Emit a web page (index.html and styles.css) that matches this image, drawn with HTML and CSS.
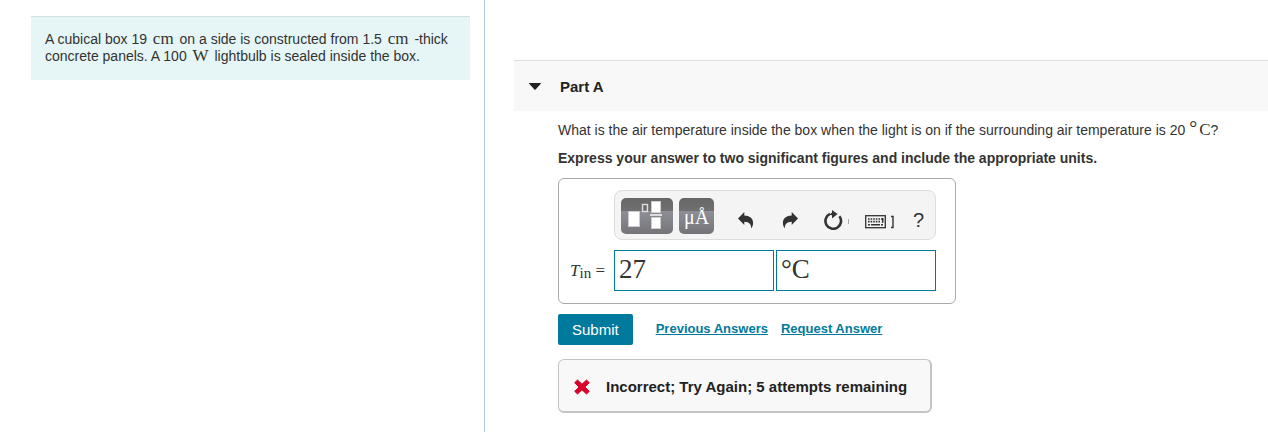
FILE: index.html
```html
<!DOCTYPE html>
<html lang="en">
<head>
    <meta charset="UTF-8">
    <meta name="viewport" content="width=device-width, initial-scale=1.0">
    <title>Part A</title>
    <link rel="stylesheet" href="styles.css">
</head>
<body>
    <div class="page">
        <aside class="problem-pane">
            <p class="problem">A cubical box 19 <span class="unit">cm</span> on a side is constructed from 1.5 <span class="unit">cm</span> -thick concrete panels. A 100 <span class="unit">W</span> lightbulb is sealed inside the box.</p>
        </aside>

        <main class="question-pane">
            <h2 class="part-header">
                <button type="button" class="part-toggle" aria-expanded="true">
                    <svg class="caret" viewBox="0 0 12 7" aria-hidden="true"><path d="M0.5 0h11a.5.5 0 0 1 .3.8L6.6 6.4a.8.8 0 0 1-1.2 0L.2.8A.5.5 0 0 1 .5 0z"/></svg>
                    Part A
                </button>
            </h2>

            <form class="part-body">
                <p class="question">What is the air temperature inside the box when the light is on if the surrounding air temperature is 20 <span class="math"><span class="degree">°</span>C</span>?</p>
                <p class="instructions">Express your answer to two significant figures and include the appropriate units.</p>

                <div class="answer-box">
                    <div class="toolbar">
                        <button type="button" class="palette" aria-label="Templates">
                            <svg width="52" height="36" viewBox="0 0 52 36">
                                <rect x="7.5" y="13.5" width="11" height="15" fill="#fff" stroke="#ccc"/>
                                <rect x="21.5" y="6.5" width="5" height="7" fill="none" stroke="#ddd" stroke-width="1.4"/>
                                <rect x="30.5" y="3.5" width="9" height="11" fill="#fff" stroke="#ccc"/>
                                <path d="M29 17h12" stroke="#ddd" stroke-width="2"/>
                                <rect x="30.5" y="19.5" width="9" height="11" fill="#fff" stroke="#ccc"/>
                            </svg>
                        </button>
                        <button type="button" class="palette palette-units" aria-label="Symbols">μÅ</button>
                        <button type="button" class="tool tool-undo" aria-label="Undo">
                            <svg width="16" height="17" viewBox="0 0 16 17"><path d="M0 6.5L6.3 0v3.6c5.2.2 8.8 2.7 8.8 7.5 0 2-.7 4-2 5.4.4-3.8-1.5-6.7-6.8-6.8V13z"/></svg>
                        </button>
                        <button type="button" class="tool tool-redo" aria-label="Redo">
                            <svg width="16" height="17" viewBox="0 0 16 17"><path d="M16 6.5L9.7 0v3.6C4.5 3.8.9 6.3.9 11.1c0 2 .7 4 2 5.4-.4-3.8 1.5-6.7 6.8-6.8V13z"/></svg>
                        </button>
                        <button type="button" class="tool tool-reset" aria-label="Reset">
                            <svg width="26" height="20" viewBox="0 0 26 20"><path d="M7 3.9A7.8 7.8 0 1 0 16.4 6.2" fill="none" stroke="#333" stroke-width="2.6"/><path d="M6.4 4.8L9 2.4V0l5.6 4-5.6 4.4V5.2z"/><path d="M25.5 9v5" stroke="#aaa"/></svg>
                        </button>
                        <button type="button" class="tool tool-keyboard" aria-label="Keyboard shortcuts">
                            <svg width="30" height="14" viewBox="0 0 30 14">
                                <rect x=".7" y=".7" width="19.6" height="12" fill="none" stroke="#333" stroke-width="1.3"/>
                                <path d="M3 4h15M3 6.7h13" fill="none" stroke="#333" stroke-width="1.7" stroke-dasharray="1.6 1"/>
                                <path d="M17.7 3v4.7M3 9.8h2M6 9.8h9M16 9.8h2" fill="none" stroke="#333" stroke-width="1.6"/>
                                <path d="M26 1.5h2v11h-2" fill="none" stroke="#333" stroke-width="1.4"/>
                            </svg>
                        </button>
                        <button type="button" class="tool tool-help" aria-label="Help">?</button>
                    </div>
                    <label class="variable" for="value"><i>T</i><sub>in</sub> =</label>
                    <div class="fields">
                        <input type="text" id="value" value="27">
                        <input type="text" id="units" aria-label="Units" value="°C">
                    </div>
                </div>

                <div class="actions">
                    <button type="submit" class="submit">Submit</button>
                    <a href="#previous">Previous Answers</a>
                    <a href="#request">Request Answer</a>
                </div>

                <p class="feedback">
                    <svg width="16" height="16" viewBox="0 0 16 16" aria-hidden="true"><path d="M3.5 1L8 5.2 12.5 1 15.3 3.7 11 8l4.3 4.3-2.8 2.7L8 10.8 3.5 15 .7 12.3 5 8 .7 3.7z" fill="#d9002b" stroke="#d9002b" stroke-linejoin="round"/></svg>
                    Incorrect; Try Again; 5 attempts remaining
                </p>
            </form>
        </main>
    </div>
</body>
</html>
```
FILE: styles.css
```css
* {
    margin: 0;
    padding: 0;
    box-sizing: border-box;
}
body {
    background-color: #fff;
    color: #333;
    font-family: "Liberation Sans", Arial, sans-serif;
    font-size: 14px;
}
button {
    border: none;
    background: none;
    color: inherit;
    font: inherit;
    cursor: pointer;
}
.page {
    display: grid;
    grid-template-columns: 38.25% 1fr;
    min-height: 100vh;
}

/* Problem statement */
.problem-pane {
    padding: 16px 14px 16px 31px;
    border-right: 1px solid #b4c8de;
}
.problem {
    padding: 14px 14px 15px;
    background-color: #e6f6f7;
    border-top: 1px solid #d5dfe0;
    line-height: 17px;
}
.unit,
.math {
    font-family: "Liberation Serif", "Times New Roman", serif;
    font-size: 17px;
    line-height: 1;
}
.unit {
    margin: 0 2px;
    line-height: 0;
}

/* Question */
.question-pane {
    padding: 60px 0 16px 29px;
}
.part-header {
    border-top: 1px solid #ddd;
    background-color: #f8f8f8;
    font-size: 15px;
}
.part-toggle {
    display: flex;
    align-items: center;
    gap: 19px;
    width: 100%;
    height: 50px;
    padding: 0 15px;
    color: #222;
}
.caret {
    width: 12px;
    height: 7px;
    fill: #222;
}
.part-body {
    padding: 9px 16px 0 44px;
}
.question {
    line-height: 20px;
}
.degree {
    margin-right: 2px;
    font-size: 20px;
    line-height: 0;
}
.instructions {
    margin: 8px 0 10px;
    font-weight: bold;
    line-height: 20px;
}
.answer-box {
    display: grid;
    grid-template-columns: 44px 322px;
    row-gap: 10px;
    width: fit-content;
    padding: 11px 19px 12px 11px;
    border: 1px solid #aaa;
    border-radius: 6px;
}
.toolbar {
    grid-column: 2;
    display: flex;
    align-items: center;
    height: 50px;
    padding: 2px 6px 0;
    border: 1px solid #ddd;
    border-radius: 8px;
    background-color: #f4f4f4;
}
.palette {
    width: 52px;
    height: 36px;
    border-radius: 5px;
    background: linear-gradient(#666 0, #707070 35%, #8e8e98 36%, #747478 100%);
    color: #fff;
}
.palette svg {
    display: block;
}
.palette-units {
    width: 35px;
    margin-left: 6px;
    padding-top: 2px;
    font-family: "Liberation Serif", "Times New Roman", serif;
    font-size: 20px;
}
.tool {
    height: 36px;
    padding-top: 8px;
    line-height: 20px;
}
.tool svg {
    display: block;
    fill: #333;
}
.tool-undo {
    margin-left: 24px;
}
.tool-redo {
    margin-left: 28px;
}
.tool-reset {
    margin-left: 25px;
}
.tool-keyboard {
    margin-left: 16px;
    padding-top: 12px;
}
.tool-help {
    margin-left: 18px;
    font-size: 20px;
}
.variable {
    align-self: center;
    font-family: "Liberation Serif", "Times New Roman", serif;
    font-size: 17px;
    white-space: nowrap;
}
.variable sub {
    font-size: 15px;
    line-height: 0;
    vertical-align: -2px;
}
.fields {
    display: grid;
    grid-template-columns: 1fr 1fr;
    gap: 2px;
}
.fields input {
    width: 100%;
    height: 41px;
    padding: 0 4px 2px;
    border: 1px solid #007a9c;
    color: #333;
    font-family: "Liberation Serif", "Times New Roman", serif;
    font-size: 27px;
}
.actions {
    display: flex;
    align-items: center;
    margin: 10px 0 14px;
}
.submit {
    height: 31px;
    padding: 0 14px;
    border-radius: 2px;
    background-color: #007a9c;
    color: #fff;
    font-size: 15px;
}
.actions a {
    margin-left: 13px;
    padding-bottom: 2px;
    color: #007a9c;
    font-size: 13px;
    font-weight: bold;
}
.submit + a {
    margin-left: 23px;
}
.feedback {
    display: flex;
    align-items: center;
    gap: 16px;
    width: fit-content;
    height: 54px;
    padding: 2px 23px 0 15px;
    border: 1px solid #c4c4c4;
    border-right-width: 2px;
    border-bottom-width: 2px;
    border-radius: 6px;
    background-color: #f8f8f8;
    color: #222;
    font-size: 15px;
    font-weight: bold;
}
```
